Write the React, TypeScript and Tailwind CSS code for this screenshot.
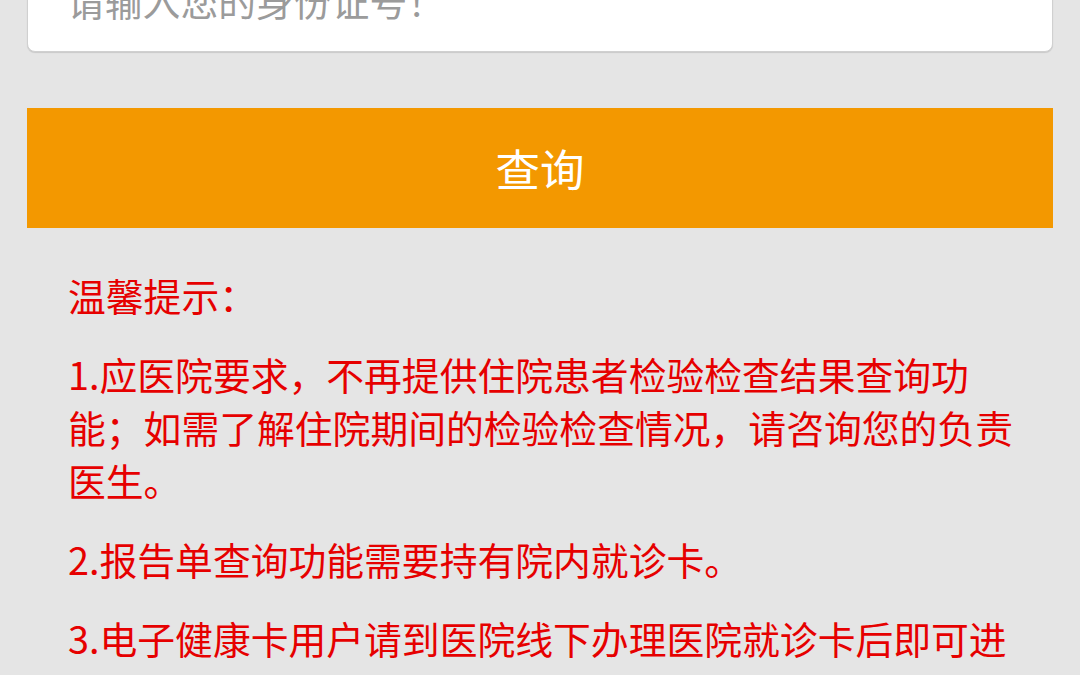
import { useState } from "react";

const tips = [
  "1.应医院要求，不再提供住院患者检验检查结果查询功能；如需了解住院期间的检验检查情况，请咨询您的负责医生。",
  "2.报告单查询功能需要持有院内就诊卡。",
  "3.电子健康卡用户请到医院线下办理医院就诊卡后即可进行报告单查询。",
];

export default function App() {
  const [idNo, setIdNo] = useState("");

  return (
    <div
      className="min-h-screen overflow-hidden bg-[#e5e5e5] px-[27px]"
      style={{ fontFamily: '"Noto Sans CJK SC", "Noto Sans", sans-serif' }}
    >
      <div className="-mt-[52px] flex h-[104px] items-center rounded-[8px] border border-[#d0d0d0] bg-white px-[39px] shadow-[0_1px_1px_rgba(0,0,0,0.12)]">
        <input
          value={idNo}
          onChange={(e) => setIdNo(e.target.value)}
          placeholder="请输入您的身份证号！"
          className="w-full bg-transparent text-[37.8px] text-[#333] outline-none placeholder:text-[#9b9b9b]"
        />
      </div>

      <button
        type="button"
        className="mt-[56px] flex h-[120px] w-full items-center justify-center bg-[#f39800] text-[44.5px] text-white"
      >
        查询
      </button>

      <div className="flex flex-col gap-[26px] pl-[41px] pr-[38px] pt-[40px] text-[37.8px] leading-[53px] text-[#e60000]">
        <p>温馨提示：</p>
        {tips.map((t) => (
          <p key={t}>{t}</p>
        ))}
      </div>
    </div>
  );
}
